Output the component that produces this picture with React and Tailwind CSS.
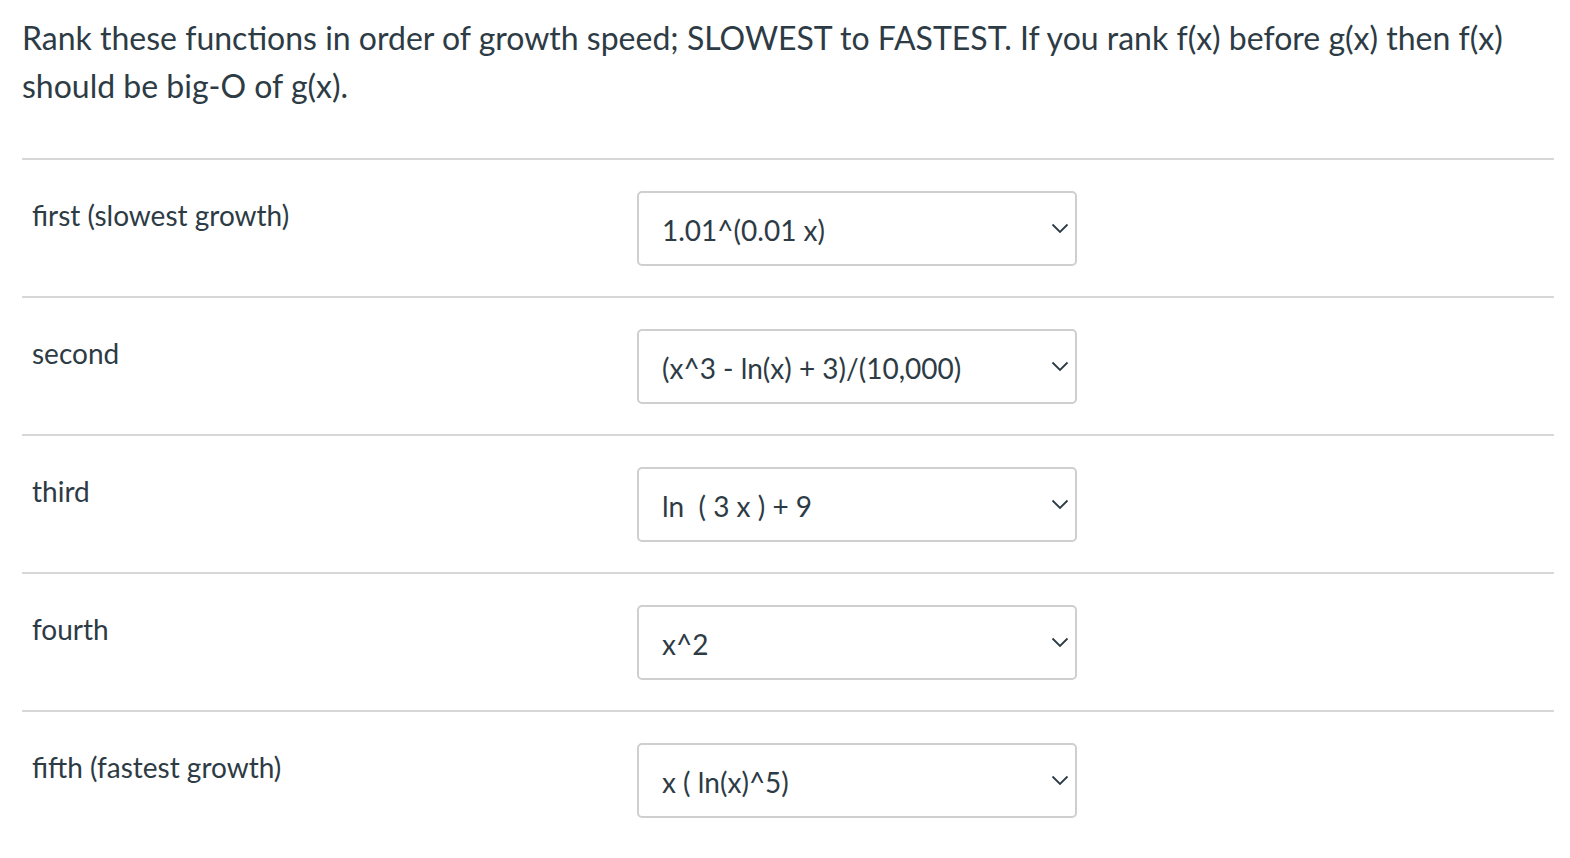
import React from "react";

const rows = [
  { label: "first (slowest growth)", value: "1.01^(0.01 x)" },
  { label: "second", value: "(x^3 - ln(x) + 3)/(10,000)" },
  { label: "third", value: "ln  ( 3 x ) + 9" },
  { label: "fourth", value: "x^2" },
  { label: "fifth (fastest growth)", value: "x ( ln(x)^5)" },
];

function Chevron() {
  return (
    <svg width="18" height="11" viewBox="0 0 18 11" fill="none" className="text-[#2d3b45]">
      <path d="M1.5 1.5 L9 9 L16.5 1.5" stroke="currentColor" strokeWidth="1.8" />
    </svg>
  );
}

export default function App() {
  return (
    <div className="min-h-screen bg-white text-[#2d3b45] font-['Lato','Noto_Sans',sans-serif] pl-[22px] pr-[16px]">
      <p className="text-[32px] leading-[48px] pt-[14px] pb-[48px]">
        Rank these functions in order of growth speed; SLOWEST to FASTEST. If you rank f(x) before g(x) then f(x)
        should be big-O of g(x).
      </p>
      {rows.map((r) => (
        <div key={r.label} className="border-t-2 border-[#d7d7d7] h-[138px] flex items-start">
          <div className="w-[615px] pl-[10px] pt-[36px] text-[28px] leading-[38px]">{r.label}</div>
          <div className="mt-[31px] w-[440px] h-[75px] border-2 border-[#cfcfcf] rounded-[5px] flex items-center justify-between pl-[23px] pr-[6px]">
            <span className="text-[28px] whitespace-pre pt-[2px]">{r.value}</span>
            <Chevron />
          </div>
        </div>
      ))}
    </div>
  );
}
